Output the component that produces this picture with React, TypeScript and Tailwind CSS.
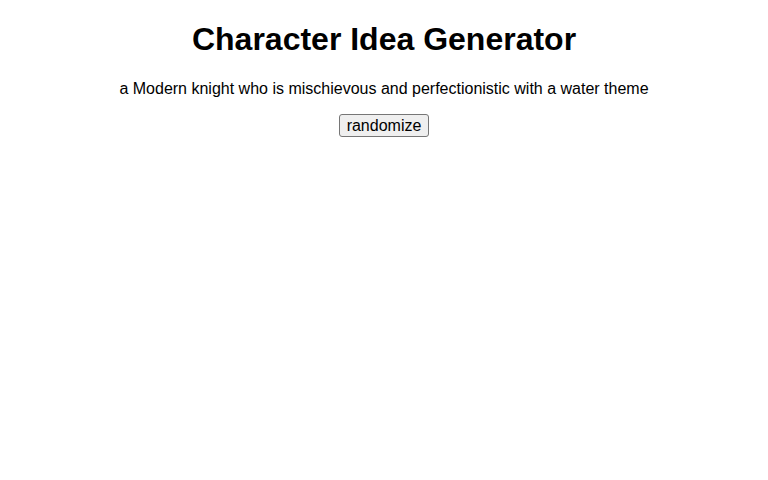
export default function App() {
  return (
    <div className="text-center text-black bg-white min-h-[480px]" style={{ fontFamily: '"Liberation Sans", Arial, sans-serif' }}>
      <h1 className="text-[32px] leading-[37px] font-bold pt-[21.44px] mb-[21.44px]">Character Idea Generator</h1>
      <p className="text-[16px] leading-[18.4px] mb-[16px]">a Modern knight who is mischievous and perfectionistic with a water theme</p>
      <div>
        <button className="text-[16px] leading-[19px] px-[7px] py-[1px] border border-[#767676] rounded-[3px] bg-[#efefef] text-black">randomize</button>
      </div>
    </div>
  );
}
